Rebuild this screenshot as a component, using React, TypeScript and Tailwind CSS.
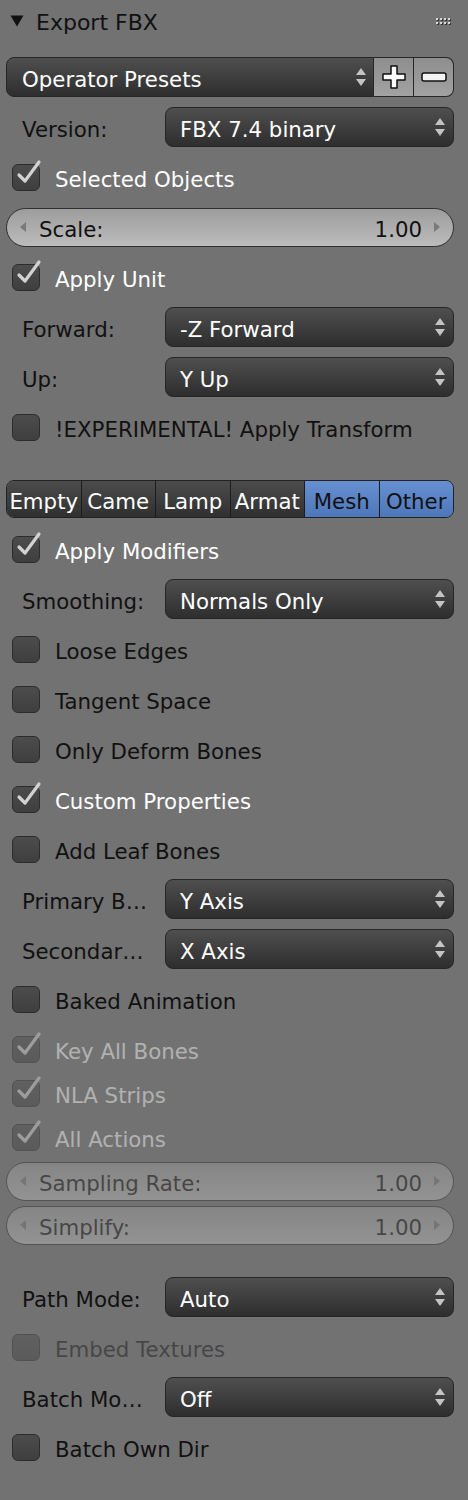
import React from 'react';

const Arrows = () => (
  <svg width="12" height="20" viewBox="0 0 12 20" className="shrink-0">
    <path d="M6 1 L11 8 L1 8 Z" fill="#c4c4c4" />
    <path d="M6 19 L11 12 L1 12 Z" fill="#c4c4c4" />
  </svg>
);

const Dropdown = ({ value }: { value: string }) => (
  <div className="w-[289px] h-[40px] rounded-[8px] border border-[#262626] bg-linear-to-b from-[#4f4f4f] to-[#2e2e2e] flex items-center pl-[14px] pr-[7px] text-white">
    <span className="flex-1 whitespace-nowrap pt-[5px]">{value}</span>
    <Arrows />
  </div>
);

const LabelRow = ({ label, value }: { label: string; value: string }) => (
  <div className="h-[50px] flex items-center px-[6px]">
    <div className="w-[159px] pl-[16px] pt-[5px] text-[#111] whitespace-nowrap">{label}</div>
    <Dropdown value={value} />
  </div>
);

const Check = ({ label, checked, h = 50, disabled }: { label: string; checked?: boolean; h?: number; disabled?: boolean }) => (
  <div className={`flex items-center pl-[12px] ${h === 50 ? 'h-[50px]' : 'h-[44px]'} ${disabled ? 'opacity-45' : ''}`}>
    <div className="relative w-[28px] h-[27px] rounded-[6px] border border-[#2c2c2c] bg-linear-to-b from-[#4c4c4c] to-[#3f3f3f] shrink-0">
      {checked && (
        <svg className="absolute left-[3px] top-[-8px] overflow-visible" width="26" height="28" viewBox="0 0 26 28">
          <path d="M3 18 L9 24 L23 5" fill="none" stroke="#d2d2d2" strokeWidth="3.2" strokeLinecap="round" strokeLinejoin="round" />
        </svg>
      )}
    </div>
    <span className={`ml-[15px] pt-[5px] whitespace-nowrap ${checked ? 'text-white' : 'text-[#111]'}`}>{label}</span>
  </div>
);

const Slider = ({ label, value, h = 50, disabled }: { label: string; value: string; h?: number; disabled?: boolean }) => (
  <div className={`flex items-center px-[6px] ${h === 50 ? 'h-[50px]' : 'h-[44px]'} ${disabled ? 'opacity-45' : ''}`}>
    <div className="w-[448px] h-[39px] rounded-full border border-[#303030] bg-linear-to-b from-[#9d9d9d] to-[#bcbcbc] flex items-center pl-[12px] pr-[12px] text-[#111]">
      <svg width="8" height="12" viewBox="0 0 8 12" className="shrink-0">
        <path d="M7 1 L1 6 L7 11 Z" fill="#7a7a7a" />
      </svg>
      <span className="ml-[12px] flex-1 pt-[5px]">{label}</span>
      <span className="pt-[5px]">{value}</span>
      <svg width="8" height="12" viewBox="0 0 8 12" className="ml-[11px] shrink-0">
        <path d="M1 1 L7 6 L1 11 Z" fill="#7a7a7a" />
      </svg>
    </div>
  </div>
);

const tabs = [
  { name: 'Empty', on: false },
  { name: 'Came', on: false },
  { name: 'Lamp', on: false },
  { name: 'Armat', on: false },
  { name: 'Mesh', on: true },
  { name: 'Other', on: true },
];

export default function App() {
  return (
    <div className="w-[468px] h-[1500px] bg-[#727272] font-['DejaVu_Sans',sans-serif] text-[21.3px] leading-[26px] overflow-hidden">
      {/* header */}
      <div className="h-[52px] flex items-start pt-[8px] pl-[10px] pr-[18px]">
        <svg width="14" height="12" viewBox="0 0 14 12" className="mt-[7px] shrink-0">
          <path d="M0.5 0.5 H13.5 L7 11.5 Z" fill="#111" />
        </svg>
        <span className="ml-[12px] pt-[2px] text-[#111] text-[22px]">Export FBX</span>
        <div className="ml-auto mt-[10px] grid grid-cols-4 gap-x-[2px] gap-y-[2px]">
          {Array.from({ length: 8 }).map((_, i) => (
            <div key={i} className="w-[2px] h-[2px] bg-[#d8d8d8] shadow-[1px_1px_0_#333]" />
          ))}
        </div>
      </div>

      {/* presets */}
      <div className="h-[50px] flex items-center px-[6px]">
        <div className="w-[368px] h-[40px] rounded-l-[8px] border border-[#262626] bg-linear-to-b from-[#4f4f4f] to-[#2e2e2e] flex items-center pl-[15px] pr-[6px] text-white">
          <span className="flex-1 pt-[5px]">Operator Presets</span>
          <Arrows />
        </div>
        <div className="w-[40px] h-[40px] border-y border-r border-[#262626] bg-linear-to-b from-[#8e8e8e] to-[#a2a2a2] flex items-center justify-center">
          <svg width="26" height="26" viewBox="0 0 26 26">
            <path d="M10 2 H16 V10 H24 V16 H16 V24 H10 V16 H2 V10 H10 Z" fill="#fafafa" stroke="#111" strokeWidth="1.5" strokeLinejoin="round" />
          </svg>
        </div>
        <div className="w-[40px] h-[40px] rounded-r-[8px] border-y border-r border-[#262626] bg-linear-to-b from-[#8e8e8e] to-[#a2a2a2] flex items-center justify-center">
          <svg width="26" height="10" viewBox="0 0 26 10">
            <rect x="1" y="1" width="24" height="8" rx="2" fill="#f4f4f4" stroke="#111" strokeWidth="1.5" />
          </svg>
        </div>
      </div>

      <LabelRow label="Version:" value="FBX 7.4 binary" />
      <Check label="Selected Objects" checked />
      <Slider label="Scale:" value="1.00" />
      <Check label="Apply Unit" checked />
      <LabelRow label="Forward:" value="-Z Forward" />
      <LabelRow label="Up:" value="Y Up" />
      <Check label="!EXPERIMENTAL! Apply Transform" />

      {/* tabs */}
      <div className="h-[22px]" />
      <div className="h-[50px] flex items-center px-[6px]">
        <div className="w-[448px] h-[38px] rounded-[8px] border border-[#222] overflow-hidden flex">
          {tabs.map((t, i) => (
            <div
              key={t.name}
              className={`flex-1 flex items-center justify-center pt-[5px] overflow-hidden whitespace-nowrap ${i < tabs.length - 1 ? 'border-r border-[#1c1c1c]' : ''} ${
                t.on ? 'bg-linear-to-b from-[#6690d2] to-[#4d77b9] text-[#111]' : 'bg-linear-to-b from-[#4c4c4c] to-[#303030] text-white'
              }`}
            >
              {t.name}
            </div>
          ))}
        </div>
      </div>

      <Check label="Apply Modifiers" checked />
      <LabelRow label="Smoothing:" value="Normals Only" />
      <Check label="Loose Edges" />
      <Check label="Tangent Space" />
      <Check label="Only Deform Bones" />
      <Check label="Custom Properties" checked />
      <Check label="Add Leaf Bones" />
      <LabelRow label="Primary B…" value="Y Axis" />
      <LabelRow label="Secondar…" value="X Axis" />
      <Check label="Baked Animation" />
      <div className="h-[3px]" />
      <Check label="Key All Bones" checked h={44} disabled />
      <Check label="NLA Strips" checked h={44} disabled />
      <Check label="All Actions" checked h={44} disabled />
      <Slider label="Sampling Rate:" value="1.00" h={44} disabled />
      <Slider label="Simplify:" value="1.00" h={44} disabled />

      <div className="h-[25px]" />
      <LabelRow label="Path Mode:" value="Auto" />
      <Check label="Embed Textures" disabled />
      <LabelRow label="Batch Mo…" value="Off" />
      <Check label="Batch Own Dir" />
    </div>
  );
}
